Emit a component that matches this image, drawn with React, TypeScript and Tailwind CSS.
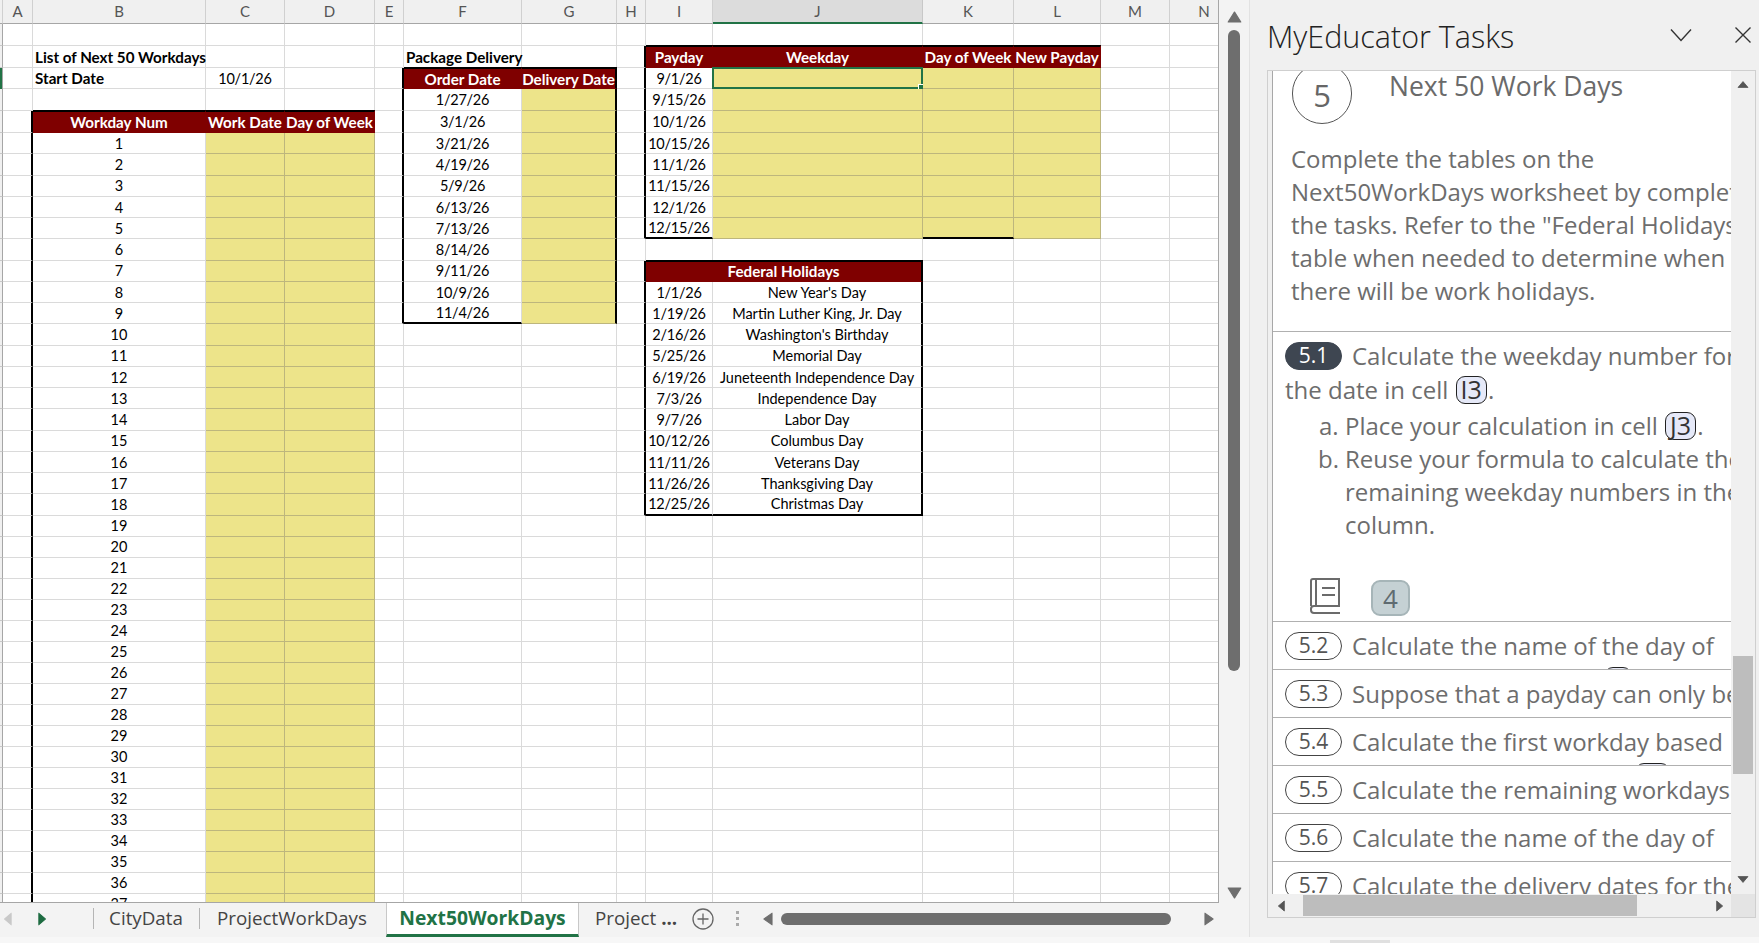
import clsx from 'clsx';

const COLS = ['', 'A', 'B', 'C', 'D', 'E', 'F', 'G', 'H', 'I', 'J', 'K', 'L', 'M', 'N'];
const LAST_ROW = 42;

const ORDER_DATES = ['1/27/26', '3/1/26', '3/21/26', '4/19/26', '5/9/26', '6/13/26', '7/13/26', '8/14/26', '9/11/26', '10/9/26', '11/4/26'];
const PAYDAYS = ['9/1/26', '9/15/26', '10/1/26', '10/15/26', '11/1/26', '11/15/26', '12/1/26', '12/15/26'];
const HOLIDAYS = [
  ['1/1/26', "New Year's Day"],
  ['1/19/26', 'Martin Luther King, Jr. Day'],
  ['2/16/26', "Washington's Birthday"],
  ['5/25/26', 'Memorial Day'],
  ['6/19/26', 'Juneteenth Independence Day'],
  ['7/3/26', 'Independence Day'],
  ['9/7/26', 'Labor Day'],
  ['10/12/26', 'Columbus Day'],
  ['11/11/26', 'Veterans Day'],
  ['11/26/26', 'Thanksgiving Day'],
  ['12/25/26', 'Christmas Day'],
];

const TEXT: Record<string, string> = {
  B2: 'List of Next 50 Workdays',
  B3: 'Start Date',
  C3: '10/1/26',
  B5: 'Workday Num',
  C5: 'Work Date',
  D5: 'Day of Week',
  F2: 'Package Delivery',
  F3: 'Order Date',
  G3: 'Delivery Date',
  I2: 'Payday',
  J2: 'Weekday',
  K2: 'Day of Week',
  L2: 'New Payday',
  I12: 'Federal Holidays',
};
for (let i = 1; i <= 37; i++) TEXT[`B${i + 5}`] = String(i);
ORDER_DATES.forEach((d, i) => (TEXT[`F${i + 4}`] = d));
PAYDAYS.forEach((d, i) => (TEXT[`I${i + 3}`] = d));
HOLIDAYS.forEach(([d, n], i) => {
  TEXT[`I${i + 13}`] = d;
  TEXT[`J${i + 13}`] = n;
});

const HEADERS = ['B5', 'C5', 'D5', 'F3', 'G3', 'I2', 'J2', 'K2', 'L2', 'I12'];
const LEFT_LABELS = ['B2', 'B3', 'F2'];

function isYellow(col: string, row: number) {
  if ((col === 'C' || col === 'D') && row >= 6) return true;
  if (col === 'G' && row >= 4 && row <= 14) return true;
  return (col === 'J' || col === 'K' || col === 'L') && row >= 3 && row <= 10;
}

function cellClass(col: string, row: number) {
  const id = `${col}${row}`;
  const header = HEADERS.includes(id);
  const yellow = isYellow(col, row);
  const label = LEFT_LABELS.includes(id);
  return clsx(
    'relative flex items-center whitespace-nowrap border-r border-b text-black',
    row <= 22 && !HEADERS.slice(5).includes(id) ? 'pt-[2px]' : 'pt-px',
    label ? 'justify-start pl-[2px] text-[15.2px] font-bold' : 'justify-center',
    header && '-mt-px border-[#7f0000] bg-[#7f0000] text-[15.2px] font-bold text-white',
    !header && !label && /\d\/\d/.test(TEXT[id] ?? '') && 'tracking-[-0.25px]',
    yellow && 'border-[#bdb67d] bg-[#ede48a]',
    !header && !yellow && 'border-[#dadada]',
    // table outlines, left edge sits on the column before the table
    col === 'A' && row >= 5 && 'border-r-2 border-r-black',
    col === 'E' && row >= 3 && row <= 14 && 'border-r-2 border-r-black',
    col === 'H' && ((row >= 2 && row <= 10) || (row >= 12 && row <= 23)) && 'border-r-2 border-r-black',
    col === 'G' && row >= 3 && row <= 14 && 'border-r-2 border-r-black',
    (id === 'I12' || (col === 'J' && row >= 13 && row <= 23)) && 'border-r-2 border-r-black',
    header && 'border-t-2 border-t-black',
    (id === 'F14' || id === 'I10' || id === 'K10' || id === 'I23' || id === 'J23') && 'border-b-2 border-b-black',
  );
}

function Triangle({ dir, className }: { dir: 'up' | 'down' | 'left' | 'right'; className: string }) {
  const points = { up: '6,1 11,11 1,11', down: '1,1 11,1 6,11', left: '11,1 11,11 2,6', right: '1,1 1,11 10,6' }[dir];
  return (
    <svg className={className} viewBox="0 0 12 12" preserveAspectRatio="none" fill="currentColor" stroke="currentColor" strokeWidth={1} strokeLinejoin="round">
      <polygon points={points} />
    </svg>
  );
}

function Sheet() {
  const cells = [];
  // column letters
  COLS.forEach((c) => {
    cells.push(
      <div
        key={`head-${c}`}
        className={clsx(
          'flex items-center justify-center border-r border-b text-[15px]',
          c === 'J' ? 'border-r-[#c8c8c8] border-b-2 border-b-[#217346] bg-[#dcdcdc] text-[#555]' : 'border-r-[#d0d0d0] border-b-[#a6a6a6] bg-[#f0f0f0] text-[#555]',
        )}
      >
        {c}
      </div>,
    );
  });
  for (let row = 1; row <= LAST_ROW; row++) {
    cells.push(
      <div
        key={`strip-${row}`}
        className={clsx('border-r border-r-[#a6a6a6]', row === 3 ? 'bg-[#217346]' : 'border-b border-b-[#c8c8c8] bg-[#f0f0f0]')}
      />,
    );
    COLS.slice(1).forEach((col) => {
      const id = `${col}${row}`;
      if (id === 'J12') return;
      cells.push(
        <div key={id} className={clsx(cellClass(col, row), id === 'I12' && 'col-span-2')}>
          {TEXT[id]}
          {id === 'J3' && (
            <div className="absolute -top-px -right-px -bottom-px -left-px border-2 border-[#217346]">
              <div className="absolute -right-[5px] -bottom-[5px] h-[8px] w-[8px] border border-white bg-[#217346]" />
            </div>
          )}
        </div>,
      );
    });
  }
  return (
    <div className="grid h-[903px] w-[1219px] shrink-0 grid-cols-[3px_30px_173px_79px_90px_29px_118px_95px_29px_67px_210px_91px_87px_69px_69px] grid-rows-[24px_22px_22px_21px_22px_22px_repeat(19,21.25px)_repeat(18,21px)] overflow-hidden border-r border-b border-[#a6a6a6] bg-white font-['Lato',sans-serif] text-[14.5px] leading-none">
      {cells}
    </div>
  );
}

function TabBar() {
  return (
    <div className="flex h-[34px] items-stretch bg-[#f3f3f3] font-['Open_Sans',sans-serif] text-[18.8px] text-[#444]">
      <div className="flex w-[93px] items-center pb-[3px] pl-[3px]">
        <Triangle dir="left" className="h-[14px] w-[9px] text-[#c9c9c9]" />
        <Triangle dir="right" className="ml-[26px] h-[14px] w-[9px] text-[#1d6b41]" />
      </div>
      <div className="mt-[5px] mb-[8px] flex w-[107px] items-center justify-center border-x border-[#b5b5b5] pr-[2px] pl-px">CityData</div>
      <div className="flex w-[186px] items-center justify-start pb-[3px] pl-[17px]">ProjectWorkDays</div>
      <div className="flex w-[193px] items-center justify-center border-x border-b-[3px] border-x-[#c8c8c8] border-b-[#217346] bg-white text-[19.3px] font-bold text-[#217346]">Next50WorkDays</div>
      <div className="flex w-[112px] items-center pb-[3px] pl-[16px]">
        Project&nbsp;<span className="font-bold">...</span>
      </div>
      <div className="ml-px flex items-center pb-[3px]">
        <svg className="h-[22px] w-[22px] text-[#666]" viewBox="0 0 22 22" fill="none" stroke="currentColor" strokeWidth={1.3}>
          <circle cx="11" cy="11" r="10" />
          <path d="M11 5.5v11M5.5 11h11" />
        </svg>
      </div>
      <div className="ml-[22px] flex flex-col items-center justify-center gap-[3px] pb-[3px]">
        <span className="h-[3px] w-[3px] bg-[#aaa]" />
        <span className="h-[3px] w-[3px] bg-[#aaa]" />
        <span className="h-[3px] w-[3px] bg-[#aaa]" />
      </div>
      <div className="ml-[23px] flex items-center pb-[3px]">
        <Triangle dir="left" className="h-[14px] w-[11px] text-[#6e6e6e]" />
        <div className="ml-[8px] h-[12px] w-[390px] rounded-full bg-[#6e6e6e]" />
        <Triangle dir="right" className="ml-[33px] h-[14px] w-[11px] text-[#6e6e6e]" />
      </div>
    </div>
  );
}

function Pill({ n, active }: { n: string; active?: boolean }) {
  return (
    <span
      className={clsx(
        'flex h-[28px] w-[57px] shrink-0 items-center justify-center rounded-full border text-[21px]',
        active ? 'border-[#3e4651] bg-[#3e4651] text-white' : 'border-[#444] bg-white text-[#555]',
      )}
    >
      {n}
    </span>
  );
}

function Chip({ children }: { children: string }) {
  return (
    <span className="mx-px inline-flex h-[28px] items-center rounded-[9px] border border-[#222] bg-[#e6e9f8] px-[4px] text-[25px] text-[#333]">{children}</span>
  );
}

const TASK_ROWS = [
  { n: '5.2', text: 'Calculate the name of the day of', arc: 'ml-[331px] w-[28px]' },
  { n: '5.3', text: 'Suppose that a payday can only be on a weekday' },
  { n: '5.4', text: 'Calculate the first workday based', arc: 'ml-[362px] w-[35px]' },
  { n: '5.5', text: 'Calculate the remaining workdays' },
  { n: '5.6', text: 'Calculate the name of the day of' },
  { n: '5.7', text: 'Calculate the delivery dates for the packages' },
];

function TaskPanel() {
  return (
    <div className="flex w-[509px] shrink-0 flex-col bg-[#f0f0f0] pr-[3px] pl-[17px]">
      <div className="flex h-[70px] shrink-0 items-center pr-[4px]">
        <span className="pt-[4px] font-['Open_Sans',sans-serif] text-[30.5px] font-light text-[#222]">MyEducator Tasks</span>
        <svg className="mr-[42px] ml-auto h-[14px] w-[22px] text-[#333]" viewBox="0 0 22 14" fill="none" stroke="currentColor" strokeWidth={1.4}>
          <path d="M1 1.5l10 11 10-11" />
        </svg>
        <svg className="h-[18px] w-[18px] text-[#333]" viewBox="0 0 18 18" fill="none" stroke="currentColor" strokeWidth={1.4}>
          <path d="M1.5 1.5l15 15M16.5 1.5l-15 15" />
        </svg>
      </div>

      <div className="flex h-[848px] shrink-0 flex-col border border-[#cfcfcf] font-['Open_Sans',sans-serif] text-[#6d6d6d]">
        <div className="flex min-h-0 flex-1">
          <div className="ml-[4px] min-w-0 flex-1 overflow-hidden border-l border-l-[#a8a8a8] bg-white">
            <div className="h-[261px] w-[460px] border-b border-[#b0b0b0]">
              <div className="flex items-start">
                <div className="-mt-[8px] ml-[19px] flex h-[61px] w-[60px] shrink-0 items-center justify-center rounded-full border border-[#555] bg-white pt-[4px] text-[31px] text-[#666]">5</div>
                <div className="-mt-px ml-[37px] text-[26.5px] leading-[33px] whitespace-nowrap text-[#6a6a6a]">Next 50 Work Days</div>
              </div>
              <div className="mt-[18px] ml-[18px] text-[24px] leading-[33px] whitespace-nowrap">
                <div>Complete the tables on the</div>
                <div>Next50WorkDays worksheet by completing</div>
                <div>the tasks. Refer to the "Federal Holidays"</div>
                <div>table when needed to determine when</div>
                <div>there will be work holidays.</div>
              </div>
            </div>

            <div className="h-[290px] w-[460px] border-b border-[#b0b0b0] pt-[7px] text-[24px] whitespace-nowrap">
              <div className="flex h-[34px] items-center pl-[12px]">
                <Pill n="5.1" active />
                <span className="ml-[10px]">Calculate the weekday number for</span>
              </div>
              <div className="flex h-[34px] items-center pl-[12px]">
                the date in cell&nbsp;<Chip>I3</Chip>.
              </div>
              <div className="mt-[2px] flex h-[33px] items-center pl-[46px]">
                <span className="w-[26px] shrink-0">a.</span>Place your calculation in cell&nbsp;<Chip>J3</Chip>.
              </div>
              <div className="flex h-[33px] items-center pl-[45px]">
                <span className="w-[27px] shrink-0">b.</span>Reuse your formula to calculate the
              </div>
              <div className="h-[33px] pl-[72px] leading-[33px]">remaining weekday numbers in the</div>
              <div className="h-[33px] pl-[72px] leading-[33px]">column.</div>
              <div className="mt-[37px] flex items-start pl-[36px]">
                <svg className="h-[36px] w-[32px] text-[#6b6b6b]" viewBox="0 0 32 36" fill="none" stroke="currentColor" strokeWidth={2}>
                  <path d="M2 28V3a2 2 0 0 1 2-2h26v27H5a3 3 0 0 0-3 3v1a3 3 0 0 0 3 3h26" />
                  <path d="M7 1.5V27" />
                  <path d="M13 10h13M13 17h13" />
                </svg>
                <span className="mt-[2px] ml-[30px] flex h-[36px] w-[39px] items-center justify-center rounded-[9px] border-2 border-[#a6b5b8] bg-[#c5d1d4] text-[26px] text-[#5f6b70]">4</span>
              </div>
            </div>

            {TASK_ROWS.map((t) => (
              <div key={t.n} className="relative h-[48px] w-[460px] overflow-hidden border-b border-[#b0b0b0] pt-[10px] pl-[12px] text-[24px] whitespace-nowrap">
                <div className="flex items-start">
                  <Pill n={t.n} />
                  <span className="-mt-[3px] ml-[10px] leading-[33px]">{t.text}</span>
                </div>
                {t.arc && <div className={clsx('absolute top-[45px] left-0 h-[20px] rounded-[9px] border border-[#222] bg-[#e6e9f8]', t.arc)} />}
              </div>
            ))}
          </div>

          {/* panel vertical scrollbar */}
          <div className="flex w-[24px] shrink-0 flex-col items-center bg-[#f0f0f0]">
            <Triangle dir="up" className="mt-[10px] h-[7px] w-[12px] text-[#555]" />
            <div className="mt-[568px] h-[118px] w-[20px] bg-[#bdbdbd]" />
            <Triangle dir="down" className="mt-[102px] h-[7px] w-[12px] text-[#555]" />
          </div>
        </div>

        {/* panel horizontal scrollbar */}
        <div className="flex h-[23px] shrink-0 items-center bg-[#f0f0f0]">
          <Triangle dir="left" className="ml-[9px] h-[12px] w-[8px] text-[#555]" />
          <div className="ml-[18px] h-[21px] w-[334px] bg-[#bdbdbd]" />
          <Triangle dir="right" className="ml-[79px] h-[12px] w-[8px] text-[#555]" />
          <div className="ml-auto h-full w-[24px] bg-[#e4e4e4]" />
        </div>
      </div>
    </div>
  );
}

export default function App() {
  return (
    <div className="flex h-[943px] w-[1759px] flex-col overflow-hidden bg-[#f3f3f3]">
      <div className="flex h-[937px] shrink-0">
        <div className="w-[1250px] shrink-0 border-r border-[#e2e2e2]">
          <div className="flex">
            <Sheet />
            <div className="flex w-[30px] flex-col items-center">
              <Triangle dir="up" className="mt-[11px] h-[12px] w-[15px] text-[#6e6e6e]" />
              <div className="mt-[7px] h-[641px] w-[12px] rounded-full bg-[#6e6e6e]" />
              <Triangle dir="down" className="mt-[216px] h-[12px] w-[15px] text-[#6e6e6e]" />
            </div>
          </div>
          <TabBar />
        </div>
        <TaskPanel />
      </div>
      <div className="h-[6px] bg-[#f7f7f7] pl-[1330px]">
        <div className="mt-[3px] h-[3px] w-[60px] bg-[#e0e0e0]" />
      </div>
    </div>
  );
}
